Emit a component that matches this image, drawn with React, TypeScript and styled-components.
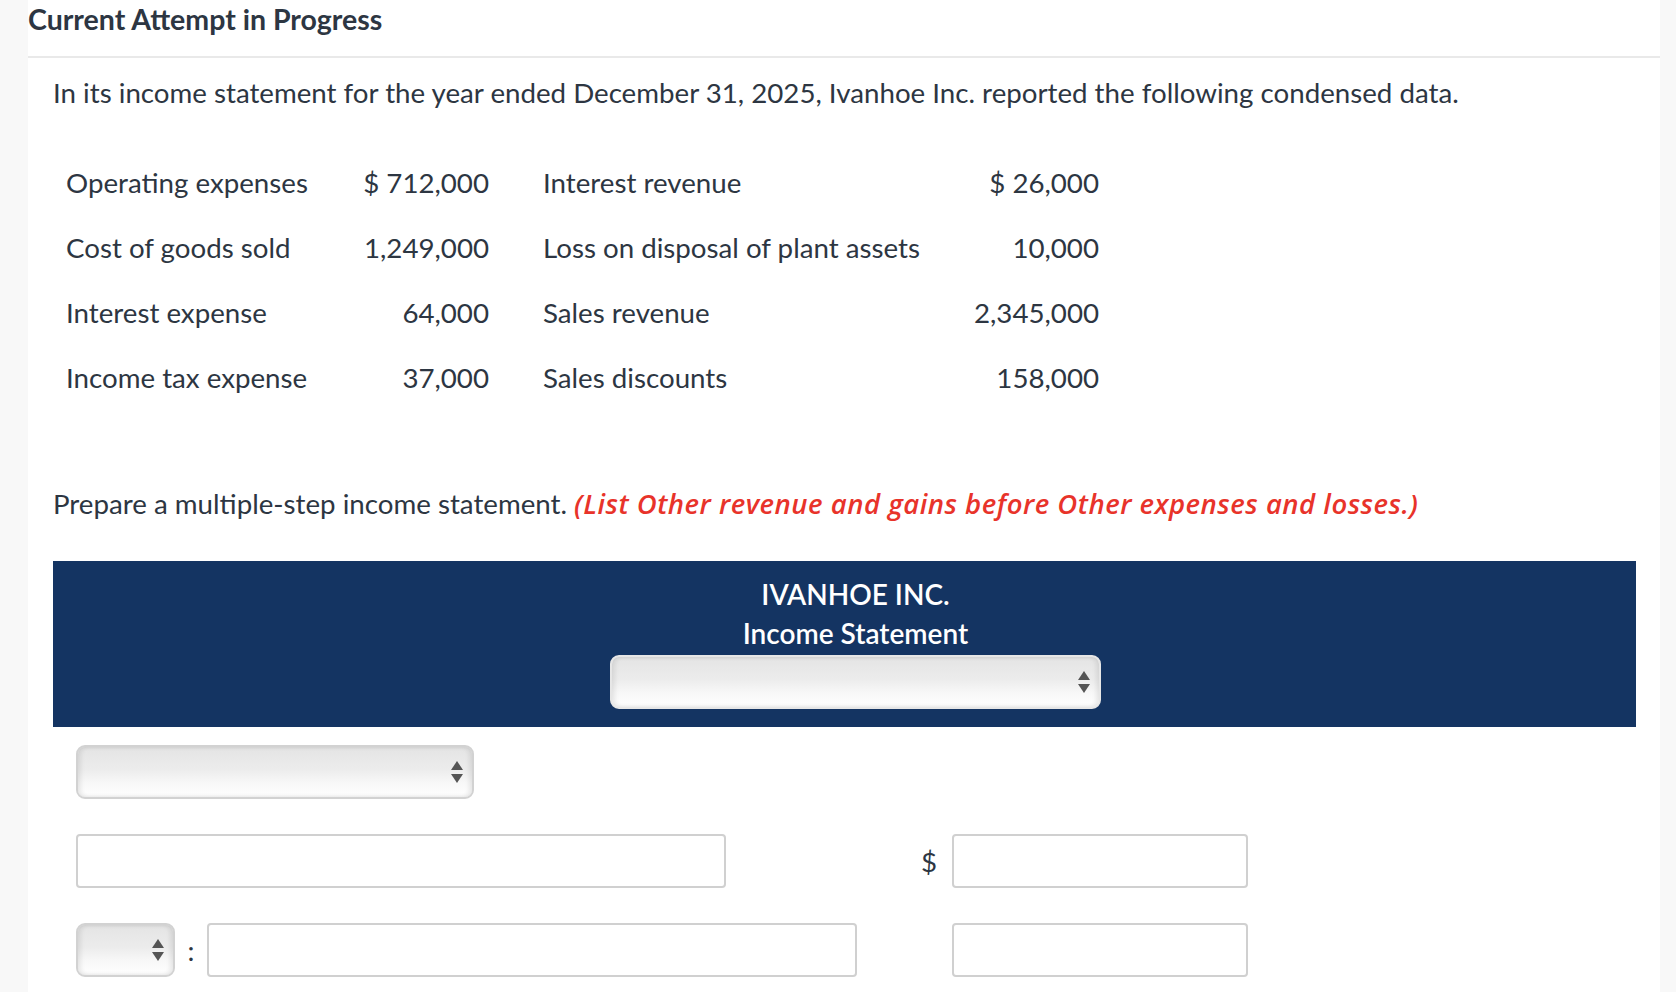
import React from "react";
import styled, {createGlobalStyle} from "styled-components";

const GlobalStyle = createGlobalStyle`
  html, body {
    margin: 0;
    padding: 0;
    background: #f8f8f8;
  }
  * {
    box-sizing: border-box;
  }
`;

const Page = styled.div`
  width: 1632px;
  min-height: 992px;
  margin-left: 28px;
  background: #ffffff;
  font-family: Lato, "Liberation Sans", sans-serif;
  color: #2d3642;
`;

const AttemptTitle = styled.div`
  height: 58px;
  line-height: 38px;
  font-size: 28.5px;
  font-weight: 700;
  border-bottom: 2px solid #e9e9e9;
`;

const Content = styled.div`
  padding: 0 24px 0 25px;
`;

const Paragraph = styled.p<{top: number}>`
  margin: ${(p) => p.top}px 0 0;
  font-size: 27.7px;
  line-height: 30px;
`;

const Hint = styled.span`
  font-family: "Open Sans", "Liberation Sans", sans-serif;
  font-style: italic;
  font-weight: 600;
  font-size: 27.5px;
  letter-spacing: 0.5px;
  color: #e8332a;
`;

const DataGrid = styled.div`
  margin-top: 42px;
  padding-left: 13px;
  display: grid;
  grid-template-columns: 263px 160px 380px 230px;
  grid-auto-rows: 65px;
  font-size: 27.7px;
`;

const Cell = styled.div<{right?: boolean; gapLeft?: number}>`
  display: flex;
  align-items: center;
  justify-content: ${(p) => (p.right ? "flex-end" : "flex-start")};
  padding-left: ${(p) => p.gapLeft || 0}px;
  white-space: nowrap;
`;

const Header = styled.div`
  margin-top: 42px;
  height: 166px;
  background: #143462;
  color: #ffffff;
  display: flex;
  flex-direction: column;
  align-items: center;
  padding: 14px 0 0 22px;
`;

const HeaderLine = styled.div`
  font-size: 28px;
  line-height: 39px;
  font-weight: 600;
`;

const SelectBox = styled.div<{w: number}>`
  width: ${(p) => p.w}px;
  height: 54px;
  display: flex;
  align-items: center;
  justify-content: flex-end;
  padding-right: 9px;
  border: 2px solid #d2d2d2;
  border-radius: 9px;
  background: linear-gradient(#e4e4e4 0%, #ececec 45%, #f7f7f7 70%, #ffffff 100%);
  box-shadow: inset 3px 0 4px rgba(0, 0, 0, 0.08), inset -3px 0 4px rgba(0, 0, 0, 0.08);
  flex-shrink: 0;
`;

const HeaderSelect = styled(SelectBox)`
  margin-top: 2px;
  border-color: #e6e6e6;
`;

const Form = styled.div`
  padding-left: 23px;
  display: flex;
  flex-direction: column;
  gap: 35px;
  margin-top: 18px;
`;

const FormRow = styled.div`
  display: grid;
  grid-template-columns: 845px 31px 296px;
  align-items: center;
`;

const LeftGroup = styled.div`
  display: flex;
  align-items: center;
`;

const TextInput = styled.input<{w: number}>`
  width: ${(p) => p.w}px;
  height: 54px;
  border: 2px solid #d0d0d0;
  border-radius: 4px;
  background: #ffffff;
  outline: none;
  font-size: 20px;
  padding: 0 8px;
`;

const Symbol = styled.div`
  font-size: 27.7px;
  text-align: right;
  padding-right: 15px;
`;

const Colon = styled.span`
  font-size: 27.7px;
  width: 32px;
  text-align: center;
`;

const Arrows = () => (
  <svg width="12" height="22" viewBox="0 0 12 22">
    <polygon points="6,0 12,9 0,9" fill="#555" />
    <polygon points="0,13 12,13 6,22" fill="#555" />
  </svg>
);

const rows = [
  ["Operating expenses", "$ 712,000", "Interest revenue", "$ 26,000"],
  ["Cost of goods sold", "1,249,000", "Loss on disposal of plant assets", "10,000"],
  ["Interest expense", "64,000", "Sales revenue", "2,345,000"],
  ["Income tax expense", "37,000", "Sales discounts", "158,000"],
];

export default function App() {
  return (
    <Page>
      <GlobalStyle />
      <AttemptTitle>Current Attempt in Progress</AttemptTitle>
      <Content>
        <Paragraph top={20}>
          In its income statement for the year ended December 31, 2025, Ivanhoe Inc. reported the following condensed data.
        </Paragraph>

        <DataGrid>
          {rows.map((r) => (
            <React.Fragment key={r[0]}>
              <Cell>{r[0]}</Cell>
              <Cell right>{r[1]}</Cell>
              <Cell gapLeft={54}>{r[2]}</Cell>
              <Cell right>{r[3]}</Cell>
            </React.Fragment>
          ))}
        </DataGrid>

        <Paragraph top={79}>
          Prepare a multiple-step income statement.{" "}
          <Hint>(List Other revenue and gains before Other expenses and losses.)</Hint>
        </Paragraph>

        <Header>
          <HeaderLine>IVANHOE INC.</HeaderLine>
          <HeaderLine>Income Statement</HeaderLine>
          <HeaderSelect w={491}>
            <Arrows />
          </HeaderSelect>
        </Header>

        <Form>
          <FormRow>
            <LeftGroup>
              <SelectBox w={398}>
                <Arrows />
              </SelectBox>
            </LeftGroup>
          </FormRow>
          <FormRow>
            <LeftGroup>
              <TextInput w={650} />
            </LeftGroup>
            <Symbol>$</Symbol>
            <TextInput w={296} />
          </FormRow>
          <FormRow>
            <LeftGroup>
              <SelectBox w={99}>
                <Arrows />
              </SelectBox>
              <Colon>:</Colon>
              <TextInput w={650} />
            </LeftGroup>
            <Symbol />
            <TextInput w={296} />
          </FormRow>
        </Form>
      </Content>
    </Page>
  );
}
